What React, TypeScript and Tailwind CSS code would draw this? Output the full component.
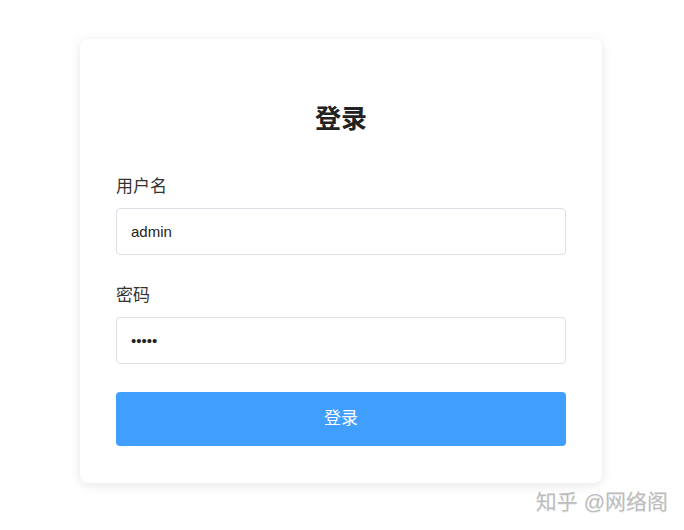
import { useState } from "react";

export default function App() {
  const [username, setUsername] = useState("admin");
  const [password, setPassword] = useState("12345");

  return (
    <div
      className="relative w-[684px] h-[530px] bg-white overflow-hidden pt-[39px]"
      style={{ fontFamily: '"Liberation Sans", "Noto Sans CJK SC", sans-serif' }}
    >
      <div className="ml-[80px] w-[522px] bg-white rounded-lg shadow-[0_2px_12px_rgba(0,0,0,0.1)] px-[36px] pt-[63px] pb-[37px]">
        <h2 className="text-center text-[26px] leading-[34px] font-bold text-[#222]">登录</h2>

        <form className="mt-[39px]" onSubmit={(e) => e.preventDefault()}>
          <label className="block text-[17px] leading-[24px] text-[#333]">用户名</label>
          <input
            value={username}
            onChange={(e) => setUsername(e.target.value)}
            className="mt-[9px] block w-full h-[47px] px-[14px] border border-[#dcdfe6] rounded-[4px] text-[15px] text-[#222] outline-none"
          />

          <label className="block mt-[29px] text-[17px] leading-[24px] text-[#333]">密码</label>
          <input
            type="password"
            value={password}
            onChange={(e) => setPassword(e.target.value)}
            className="mt-[9px] block w-full h-[47px] px-[14px] border border-[#dcdfe6] rounded-[4px] text-[15px] text-[#222] outline-none"
          />

          <button
            type="submit"
            className="mt-[28px] w-full h-[54px] rounded-[4px] bg-[#409eff] text-white text-[17px]"
          >
            登录
          </button>
        </form>
      </div>

      <div className="absolute right-[16px] top-[489px] text-[21px] leading-[26px] text-[#bdbdbd] [text-shadow:0_1px_1px_rgba(0,0,0,0.08)]">
        知乎 @网络阁
      </div>
    </div>
  );
}
